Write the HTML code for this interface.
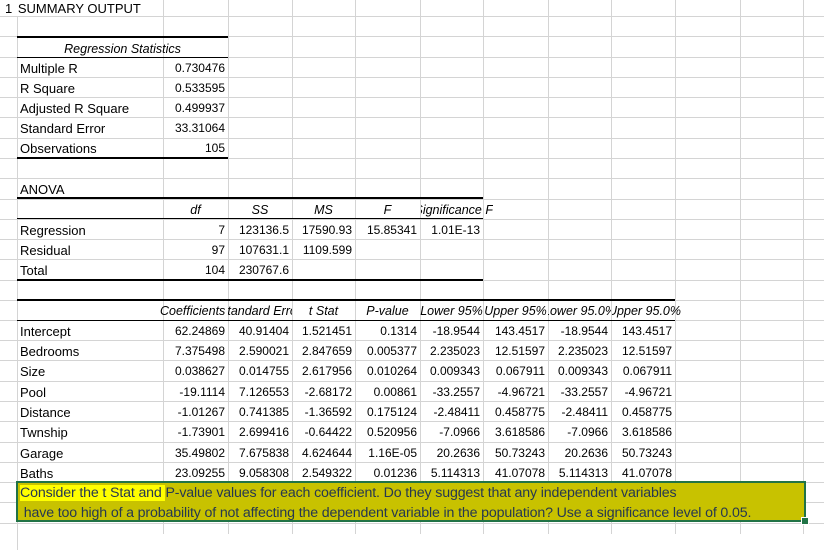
<!DOCTYPE html>
<html><head><meta charset="utf-8"><style>
body{margin:0;width:824px;height:534px;overflow:hidden;background:#fff;position:relative;font-family:"Liberation Sans",sans-serif;font-size:12px;color:#000}
.h{position:absolute;left:0;width:824px;height:1px;background:#d4d4d4}
.v{position:absolute;top:0;height:534px;width:1px;background:#d4d4d4}
.c{position:absolute;height:20px;line-height:23px;white-space:nowrap;overflow:hidden;padding:0 3px;box-sizing:border-box}
.l{font-size:13px}
.r{text-align:right}
.i{font-style:italic;display:flex;justify-content:center;font-size:12.5px}
.k{position:absolute;background:#000;height:2px}
.t{position:absolute;background:#000;height:1px}
</style></head><body>
<div class="h" style="top:16px"></div><div class="h" style="top:36px"></div><div class="h" style="top:57px"></div><div class="h" style="top:77px"></div><div class="h" style="top:97px"></div><div class="h" style="top:117px"></div><div class="h" style="top:138px"></div><div class="h" style="top:158px"></div><div class="h" style="top:178px"></div><div class="h" style="top:199px"></div><div class="h" style="top:219px"></div><div class="h" style="top:239px"></div><div class="h" style="top:259px"></div><div class="h" style="top:280px"></div><div class="h" style="top:300px"></div><div class="h" style="top:320px"></div><div class="h" style="top:340px"></div><div class="h" style="top:360px"></div><div class="h" style="top:381px"></div><div class="h" style="top:401px"></div><div class="h" style="top:421px"></div><div class="h" style="top:442px"></div><div class="h" style="top:462px"></div><div class="h" style="top:482px"></div><div class="h" style="top:502px"></div><div class="h" style="top:523px"></div>
<div class="v" style="left:17px;top:16px"></div><div class="v" style="left:163px"></div><div class="v" style="left:228px"></div><div class="v" style="left:292px"></div><div class="v" style="left:355px"></div><div class="v" style="left:420px"></div><div class="v" style="left:483px"></div><div class="v" style="left:548px"></div><div class="v" style="left:611px"></div><div class="v" style="left:675px"></div><div class="v" style="left:740px"></div><div class="v" style="left:803px"></div>

<div class="c l" style="left:3px;top:-3px;width:160px;padding-left:2px">1 <span style="margin-left:2px">SUMMARY OUTPUT</span></div>

<div class="k" style="left:17px;top:36px;width:211px"></div>
<div class="c i" style="left:17px;top:38px;width:211px">Regression Statistics</div>
<div class="t" style="left:17px;top:57px;width:211px"></div>
<div class="c l" style="left:17px;top:57px;width:146px">Multiple R</div><div class="c r" style="left:163px;top:57px;width:65px">0.730476</div>
<div class="c l" style="left:17px;top:77px;width:146px">R Square</div><div class="c r" style="left:163px;top:77px;width:65px">0.533595</div>
<div class="c l" style="left:17px;top:97px;width:146px">Adjusted R Square</div><div class="c r" style="left:163px;top:97px;width:65px">0.499937</div>
<div class="c l" style="left:17px;top:117px;width:146px">Standard Error</div><div class="c r" style="left:163px;top:117px;width:65px">33.31064</div>
<div class="c l" style="left:17px;top:137px;width:146px">Observations</div><div class="c r" style="left:163px;top:137px;width:65px">105</div>
<div class="k" style="left:17px;top:157px;width:211px"></div>

<div class="c l" style="left:17px;top:178px;width:146px">ANOVA</div>
<div class="k" style="left:17px;top:197px;width:466px"></div>
<div class="c i" style="left:163px;top:199px;width:65px">df</div>
<div class="c i" style="left:228px;top:199px;width:64px">SS</div>
<div class="c i" style="left:292px;top:199px;width:63px">MS</div>
<div class="c i" style="left:355px;top:199px;width:65px">F</div>
<div class="c" style="left:421px;top:199px;width:72px;padding:0;font-style:italic;font-size:12.5px;direction:rtl;text-align:right">Significance F</div>
<div class="t" style="left:17px;top:218px;width:466px"></div>
<div class="c l" style="left:17px;top:219px;width:146px">Regression</div><div class="c r" style="left:163px;top:219px;width:65px">7</div><div class="c r" style="left:228px;top:219px;width:64px">123136.5</div><div class="c r" style="left:292px;top:219px;width:63px">17590.93</div><div class="c r" style="left:355px;top:219px;width:65px">15.85341</div><div class="c r" style="left:420px;top:219px;width:63px">1.01E-13</div>
<div class="c l" style="left:17px;top:239px;width:146px">Residual</div><div class="c r" style="left:163px;top:239px;width:65px">97</div><div class="c r" style="left:228px;top:239px;width:64px">107631.1</div><div class="c r" style="left:292px;top:239px;width:63px">1109.599</div>
<div class="c l" style="left:17px;top:259px;width:146px">Total</div><div class="c r" style="left:163px;top:259px;width:65px">104</div><div class="c r" style="left:228px;top:259px;width:64px">230767.6</div>
<div class="k" style="left:17px;top:279px;width:466px"></div>

<div class="k" style="left:17px;top:299px;width:658px"></div>
<div class="c i" style="left:160px;top:300px;width:68px;padding:0;justify-content:flex-start">Coefficients</div>
<div class="c i" style="left:228px;top:300px;width:64px">Standard Error</div>
<div class="c i" style="left:292px;top:300px;width:63px">t Stat</div>
<div class="c i" style="left:355px;top:300px;width:65px">P-value</div>
<div class="c i" style="left:420px;top:300px;width:63px">Lower 95%</div>
<div class="c i" style="left:483px;top:300px;width:65px">Upper 95%</div>
<div class="c i" style="left:548px;top:300px;width:63px">Lower 95.0%</div>
<div class="c" style="left:612px;top:300px;width:69px;padding:0;font-style:italic;font-size:12.5px;direction:rtl;text-align:right"><span style="margin-left:-3px">Upper 95.0%</span></div>
<div class="t" style="left:17px;top:320px;width:658px"></div>

<div class="c l" style="left:17px;top:320px;width:146px">Intercept</div><div class="c r" style="left:163px;top:320px;width:65px">62.24869</div><div class="c r" style="left:228px;top:320px;width:64px">40.91404</div><div class="c r" style="left:292px;top:320px;width:63px">1.521451</div><div class="c r" style="left:355px;top:320px;width:65px">0.1314</div><div class="c r" style="left:420px;top:320px;width:63px">-18.9544</div><div class="c r" style="left:483px;top:320px;width:65px">143.4517</div><div class="c r" style="left:548px;top:320px;width:63px">-18.9544</div><div class="c r" style="left:611px;top:320px;width:64px">143.4517</div>
<div class="c l" style="left:17px;top:340px;width:146px">Bedrooms</div><div class="c r" style="left:163px;top:340px;width:65px">7.375498</div><div class="c r" style="left:228px;top:340px;width:64px">2.590021</div><div class="c r" style="left:292px;top:340px;width:63px">2.847659</div><div class="c r" style="left:355px;top:340px;width:65px">0.005377</div><div class="c r" style="left:420px;top:340px;width:63px">2.235023</div><div class="c r" style="left:483px;top:340px;width:65px">12.51597</div><div class="c r" style="left:548px;top:340px;width:63px">2.235023</div><div class="c r" style="left:611px;top:340px;width:64px">12.51597</div>
<div class="c l" style="left:17px;top:360px;width:146px">Size</div><div class="c r" style="left:163px;top:360px;width:65px">0.038627</div><div class="c r" style="left:228px;top:360px;width:64px">0.014755</div><div class="c r" style="left:292px;top:360px;width:63px">2.617956</div><div class="c r" style="left:355px;top:360px;width:65px">0.010264</div><div class="c r" style="left:420px;top:360px;width:63px">0.009343</div><div class="c r" style="left:483px;top:360px;width:65px">0.067911</div><div class="c r" style="left:548px;top:360px;width:63px">0.009343</div><div class="c r" style="left:611px;top:360px;width:64px">0.067911</div>
<div class="c l" style="left:17px;top:381px;width:146px">Pool</div><div class="c r" style="left:163px;top:381px;width:65px">-19.1114</div><div class="c r" style="left:228px;top:381px;width:64px">7.126553</div><div class="c r" style="left:292px;top:381px;width:63px">-2.68172</div><div class="c r" style="left:355px;top:381px;width:65px">0.00861</div><div class="c r" style="left:420px;top:381px;width:63px">-33.2557</div><div class="c r" style="left:483px;top:381px;width:65px">-4.96721</div><div class="c r" style="left:548px;top:381px;width:63px">-33.2557</div><div class="c r" style="left:611px;top:381px;width:64px">-4.96721</div>
<div class="c l" style="left:17px;top:401px;width:146px">Distance</div><div class="c r" style="left:163px;top:401px;width:65px">-1.01267</div><div class="c r" style="left:228px;top:401px;width:64px">0.741385</div><div class="c r" style="left:292px;top:401px;width:63px">-1.36592</div><div class="c r" style="left:355px;top:401px;width:65px">0.175124</div><div class="c r" style="left:420px;top:401px;width:63px">-2.48411</div><div class="c r" style="left:483px;top:401px;width:65px">0.458775</div><div class="c r" style="left:548px;top:401px;width:63px">-2.48411</div><div class="c r" style="left:611px;top:401px;width:64px">0.458775</div>
<div class="c l" style="left:17px;top:421px;width:146px">Twnship</div><div class="c r" style="left:163px;top:421px;width:65px">-1.73901</div><div class="c r" style="left:228px;top:421px;width:64px">2.699416</div><div class="c r" style="left:292px;top:421px;width:63px">-0.64422</div><div class="c r" style="left:355px;top:421px;width:65px">0.520956</div><div class="c r" style="left:420px;top:421px;width:63px">-7.0966</div><div class="c r" style="left:483px;top:421px;width:65px">3.618586</div><div class="c r" style="left:548px;top:421px;width:63px">-7.0966</div><div class="c r" style="left:611px;top:421px;width:64px">3.618586</div>
<div class="c l" style="left:17px;top:442px;width:146px">Garage</div><div class="c r" style="left:163px;top:442px;width:65px">35.49802</div><div class="c r" style="left:228px;top:442px;width:64px">7.675838</div><div class="c r" style="left:292px;top:442px;width:63px">4.624644</div><div class="c r" style="left:355px;top:442px;width:65px">1.16E-05</div><div class="c r" style="left:420px;top:442px;width:63px">20.2636</div><div class="c r" style="left:483px;top:442px;width:65px">50.73243</div><div class="c r" style="left:548px;top:442px;width:63px">20.2636</div><div class="c r" style="left:611px;top:442px;width:64px">50.73243</div>
<div class="c l" style="left:17px;top:462px;width:146px">Baths</div><div class="c r" style="left:163px;top:462px;width:65px">23.09255</div><div class="c r" style="left:228px;top:462px;width:64px">9.058308</div><div class="c r" style="left:292px;top:462px;width:63px">2.549322</div><div class="c r" style="left:355px;top:462px;width:65px">0.01236</div><div class="c r" style="left:420px;top:462px;width:63px">5.114313</div><div class="c r" style="left:483px;top:462px;width:65px">41.07078</div><div class="c r" style="left:548px;top:462px;width:63px">5.114313</div><div class="c r" style="left:611px;top:462px;width:64px">41.07078</div>

<div style="position:absolute;left:16px;top:481px;width:786px;height:37px;background:#c8c200;border:2px solid #217346"></div>
<div style="position:absolute;left:801px;top:517px;width:6px;height:6px;background:#217346;border:1px solid #fff"></div>
<div style="position:absolute;left:20px;top:483px;line-height:20px;font-size:14.2px;color:#263850;white-space:nowrap;letter-spacing:-0.15px"><span style="background:#ffff00">Consider the t Stat and </span>P-value values for each coefficient. Do they suggest that any independent variables<br>&nbsp;have too high of a probability of not affecting the dependent variable in the population? Use a significance level of 0.05.</div>
</body></html>
